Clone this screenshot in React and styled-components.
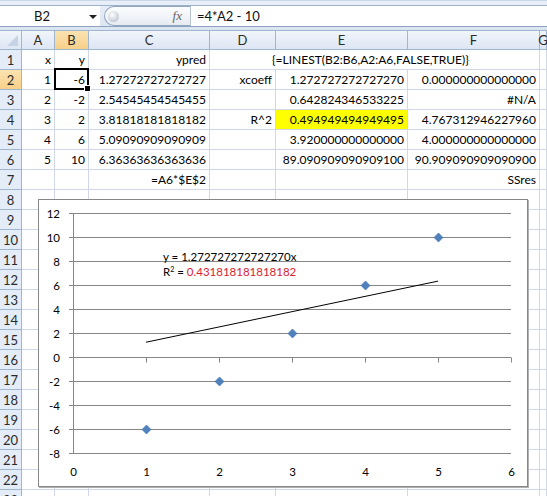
import React from 'react'
import styled, { createGlobalStyle, css } from 'styled-components'

const GlobalStyle = createGlobalStyle`
  html, body {
    margin: 0;
    padding: 0;
    background: #fff;
    overflow: hidden;
  }
  body {
    font-family: Lato, "Liberation Sans", Arial, sans-serif;
  }
`

const Page = styled.div`
  width: 547px;
  height: 496px;
  overflow: hidden;
  position: relative;
`

const FormulaBar = styled.div`
  height: 30px;
  box-sizing: border-box;
  display: flex;
  align-items: stretch;
  padding: 4px 0 3px 0;
  background: linear-gradient(#e9eff8, #dbe5f2);
  border-top: 1px solid #c9d6e8;
`

const BarInner = styled.div`
  flex: 1;
  display: flex;
  align-items: stretch;
  border-top: 1px solid #9fb2cc;
  border-bottom: 1px solid #8ea3bf;
`

const NameBox = styled.div`
  width: 100px;
  background: #fff;
  display: flex;
  align-items: center;
  position: relative;
  font-size: 13px;
  color: #111;

  span {
    width: 84px;
    text-align: center;
  }
`

const DropArrow = styled.div`
  position: absolute;
  right: 3px;
  top: 9px;
  width: 0;
  height: 0;
  border-left: 4px solid transparent;
  border-right: 4px solid transparent;
  border-top: 4px solid #222;
`

const FxPill = styled.div`
  margin-left: 4px;
  width: 86px;
  box-sizing: border-box;
  border: 1px solid #93a6c0;
  border-right: none;
  border-radius: 11px 0 0 11px;
  background: linear-gradient(#fdfdfe, #e6ebf2);
  display: flex;
  align-items: center;
  justify-content: space-between;
  padding: 0 8px 0 3px;
`

const Dot = styled.div`
  width: 11px;
  height: 11px;
  border-radius: 50%;
  background: radial-gradient(circle at 40% 35%, #ffffff, #c5ccd6 70%, #a9b3c0);
`

const Fx = styled.span`
  font-family: "Liberation Serif", "DejaVu Serif", serif;
  font-style: italic;
  font-size: 13px;
  color: #666;
`

const FormulaInput = styled.div`
  flex: 1;
  background: #fff;
  border-left: 1px solid #b6c3d5;
  display: flex;
  align-items: center;
  padding-left: 6px;
  font-size: 13px;
  color: #111;
`

const SheetWrap = styled.div`
  position: relative;
`

const Sheet = styled.div`
  display: grid;
  grid-template-columns: 22px 33px 34px 121px 66px 132px 132px 7px;
  grid-auto-rows: 20px;
`

const headBase = css`
  box-sizing: border-box;
  border-right: 1px solid #9eb6ce;
  border-bottom: 1px solid #9eb6ce;
  display: flex;
  align-items: center;
  justify-content: center;
  font-size: 13px;
  color: #2b2b2b;
  background: ${p =>
    p.$sel
      ? 'linear-gradient(#fbe2b0, #f7d08a)'
      : 'linear-gradient(#f1f5fb, #dde6f3)'};
`

const ColHead = styled.div`
  ${headBase}
  border-top: 1px solid #9eb6ce;
`

const RowHead = styled.div`
  ${headBase}
  background: ${p => (p.$sel ? 'linear-gradient(#fbe2b0, #f7d08a)' : '#e4ecf7')};
`

const Corner = styled.div`
  ${headBase}
  border-top: 1px solid #9eb6ce;
  position: relative;

  &::after {
    content: '';
    position: absolute;
    right: 3px;
    bottom: 3px;
    width: 0;
    height: 0;
    border-left: 11px solid transparent;
    border-bottom: 11px solid #c6d3e5;
  }
`

const Cell = styled.div`
  box-sizing: border-box;
  border-right: 1px solid #d0d7e5;
  border-bottom: 1px solid #d0d7e5;
  font-size: 12px;
  line-height: 19px;
  color: #000;
  white-space: nowrap;
  overflow: visible;
  text-align: ${p => p.$align || 'right'};
  padding: ${p => (p.$align === 'left' ? `0 0 0 ${p.$indent || 3}px` : '0 3px 0 0')};
  background: ${p => (p.$hl ? '#ffff00' : '#fff')};
  grid-column: ${p => (p.$span ? `span ${p.$span}` : 'auto')};
  position: relative;

  ${p =>
    p.$active &&
    css`
      &::after {
        content: '';
        position: absolute;
        left: -1px;
        top: -2px;
        right: -1px;
        bottom: -1px;
        border: 2px solid #000;
      }
      &::before {
        content: '';
        position: absolute;
        right: -3px;
        bottom: -3px;
        width: 5px;
        height: 5px;
        background: #000;
        border: 1px solid #fff;
        z-index: 2;
      }
    `}
`

const ChartBox = styled.div`
  position: absolute;
  left: 38px;
  top: 169px;
  width: 490px;
  height: 288px;
  box-sizing: border-box;
  background: #fff;
  border: 1px solid #868686;
  box-shadow: 1px 1px 0 #b0b0b0;
`

const cols = ['A', 'B', 'C', 'D', 'E', 'F', 'G']

const rows = [
  ['x', 'y', 'ypred'],
  ['1', '-6', '1.27272727272727', 'xcoeff', '1.272727272727270', '0.000000000000000'],
  ['2', '-2', '2.54545454545455', '', '0.642824346533225', '#N/A'],
  ['3', '2', '3.81818181818182', 'R^2', '0.494949494949495', '4.767312946227960'],
  ['4', '6', '5.09090909090909', '', '3.920000000000000', '4.000000000000000'],
  ['5', '10', '6.36363636363636', '', '89.090909090909100', '90.909090909090900'],
  ['', '', '=A6*$E$2', '', '', 'SSres'],
]

const points = [
  [1, -6],
  [2, -2],
  [3, 2],
  [4, 6],
  [5, 10],
]

// plot mapping, in chart-box coordinates
const px = v => 34 + 73 * v
const py = v => 157.5 - 12 * v

function Chart() {
  const yTicks = [12, 10, 8, 6, 4, 2, 0, -2, -4, -6, -8]
  const xTicks = [0, 1, 2, 3, 4, 5, 6]
  const slope = 1.27272727272727
  return (
    <ChartBox>
      <svg width="488" height="286" style={{ display: 'block' }}>
        {yTicks.map(v => (
          <line key={v} x1={30} x2={472} y1={py(v)} y2={py(v)} stroke="#868686" strokeWidth="1" />
        ))}
        <line x1={px(0) + 0.5} x2={px(0) + 0.5} y1={py(12)} y2={py(-8)} stroke="#868686" />
        {xTicks.slice(1).map(v => (
          <line key={v} x1={px(v) + 0.5} x2={px(v) + 0.5} y1={py(0)} y2={py(0) + 5} stroke="#868686" />
        ))}
        <g fontFamily="Lato, 'Liberation Sans', sans-serif" fontSize="11.5" fill="#000">
          {yTicks.map(v => (
            <text key={v} x={21} y={py(v) + 4} textAnchor="end">
              {v}
            </text>
          ))}
          {xTicks.map(v => (
            <text key={v} x={px(v) + 0.5} y={276} textAnchor="middle">
              {v}
            </text>
          ))}
        </g>
        <line
          x1={px(1)}
          y1={py(slope)}
          x2={px(5)}
          y2={py(slope * 5)}
          stroke="#000"
          strokeWidth="1"
        />
        {points.map(([x, y]) => {
          const cx = px(x) + 0.5
          const cy = py(y)
          return (
            <polygon
              key={x}
              points={`${cx},${cy - 4.5} ${cx + 4.5},${cy} ${cx},${cy + 4.5} ${cx - 4.5},${cy}`}
              fill="#4f81bd"
              stroke="#3f6ea6"
              strokeWidth="0.6"
            />
          )
        })}
        <g fontFamily="Lato, 'Liberation Sans', sans-serif" fontSize="11.5" fill="#000">
          <text x={124} y={61}>y = 1.272727272727270x</text>
          <text x={124} y={76}>
            R<tspan fontSize="7" dy="-4">2</tspan>
            <tspan dy="4"> = </tspan>
            <tspan fill="#d9242f">0.431818181818182</tspan>
          </text>
        </g>
      </svg>
    </ChartBox>
  )
}

export default function App() {
  const body = []
  for (let r = 1; r <= 23; r++) {
    const data = rows[r - 1] || []
    body.push(
      <RowHead key={`h${r}`} $sel={r === 2}>
        {r}
      </RowHead>
    )
    if (r === 1) {
      body.push(<Cell key="a1">{data[0]}</Cell>)
      body.push(<Cell key="b1">{data[1]}</Cell>)
      body.push(<Cell key="c1">{data[2]}</Cell>)
      body.push(
        <Cell key="d1" $span={3} $align="left" $indent={62}>
          {'{=LINEST(B2:B6,A2:A6,FALSE,TRUE)}'}
        </Cell>
      )
      body.push(<Cell key="g1" />)
      continue
    }
    for (let c = 0; c < 7; c++) {
      body.push(
        <Cell
          key={`${r}-${c}`}
          $active={r === 2 && c === 1}
          $hl={r === 4 && c === 4}
        >
          {data[c] || ''}
        </Cell>
      )
    }
  }

  return (
    <Page>
      <GlobalStyle />
      <FormulaBar>
        <BarInner>
          <NameBox>
            <span>B2</span>
            <DropArrow />
          </NameBox>
          <FxPill>
            <Dot />
            <Fx>fx</Fx>
          </FxPill>
          <FormulaInput>=4*A2 - 10</FormulaInput>
        </BarInner>
      </FormulaBar>
      <SheetWrap>
        <Sheet>
          <Corner />
          {cols.map((c, i) => (
            <ColHead key={i} $sel={c === 'B'}>
              {c}
            </ColHead>
          ))}
          {body}
        </Sheet>
        <Chart />
      </SheetWrap>
    </Page>
  )
}
